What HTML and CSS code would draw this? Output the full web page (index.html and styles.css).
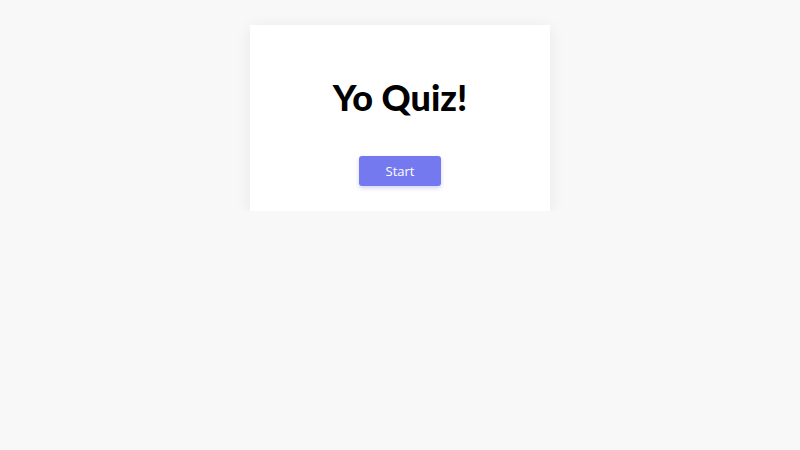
FILE: index.html
```html
<!DOCTYPE html>
<html>
<head>
  <title>Yo Quiz!</title>
  <meta charset="utf-8">
  <link rel="stylesheet" href="styles.css">
</head>
<body>
<div class="card">
  <h1 class="title">Yo Quiz!</h1>
  <button class="start-btn" type="button">Start</button>
</div>
</body>
</html>
```

FILE: styles.css
```css
body {
  font-family: Lato, "Open Sans", sans-serif;
  margin: 0;
  background-color: #f8f8f8;
}

.card {
  width: 300px;
  height: 186px;
  margin: 25px auto 0;
  background-color: #fff;
  box-shadow: 0 3px 16px rgba(0, 0, 0, 0.07);
  display: flex;
  flex-direction: column;
  align-items: center;
  box-sizing: border-box;
  padding-top: 54px;
}

.title {
  font-size: 36px;
  font-weight: 900;
  line-height: 1;
  margin: 0 0 41px;
  color: #000;
}

.start-btn {
  width: 82px;
  height: 30px;
  border: none;
  border-radius: 3px;
  background-color: #7479f0;
  color: #fff;
  font-family: "Open Sans", sans-serif;
  font-size: 13px;
  box-shadow: 0 2px 4px rgba(80, 80, 200, 0.25);
  cursor: pointer;
}
```
